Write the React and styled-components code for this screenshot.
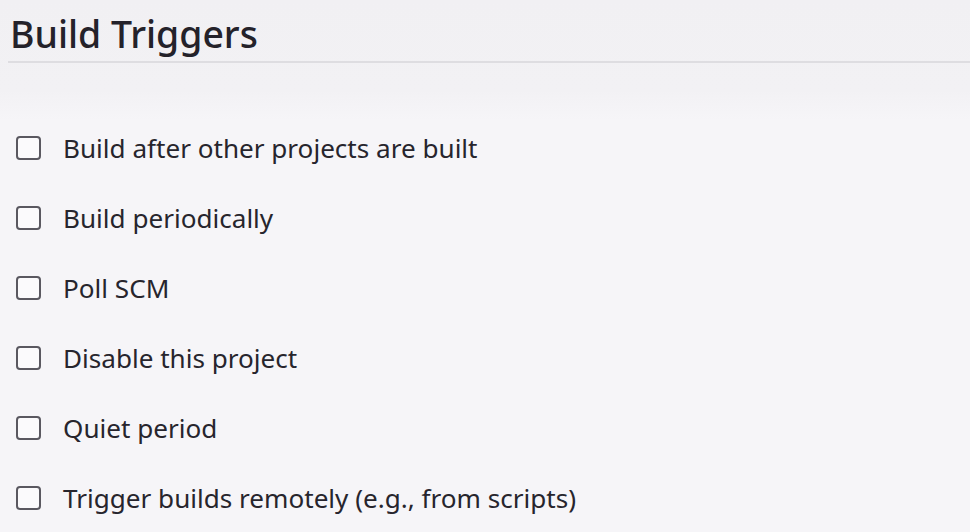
import styled, { createGlobalStyle } from "styled-components"

const GlobalStyle = createGlobalStyle`
  html, body {
    margin: 0;
    padding: 0;
    background: #f5f4f7;
    font-family: "Noto Sans", "Open Sans", sans-serif;
    color: #24222a;
  }
`

const Page = styled.div`
  width: 970px;
  height: 532px;
  overflow: hidden;
  background: linear-gradient(#f1f0f3 0, #f2f1f4 90px, #f6f5f8 120px, #f6f5f8 100%);
`

const Title = styled.h2`
  margin: 0 0 0 8px;
  padding: 12px 0 5px 2px;
  font-size: 37.4px;
  font-weight: 500;
  line-height: 44px;
  border-bottom: 2px solid #dedde1;
`

const List = styled.div`
  display: flex;
  flex-direction: column;
  gap: 34px;
  padding: 67px 0 0 16px;
`

const Row = styled.label`
  display: flex;
  align-items: center;
  gap: 22px;
  height: 36px;
  font-size: 26.1px;
  color: #27252d;
`

const Box = styled.span`
  width: 21px;
  height: 20px;
  border: 2px solid #5a5860;
  border-radius: 4px;
  background: #fbfafc;
  flex-shrink: 0;
`

const items = [
  "Build after other projects are built",
  "Build periodically",
  "Poll SCM",
  "Disable this project",
  "Quiet period",
  "Trigger builds remotely (e.g., from scripts)",
]

export default function App() {
  return (
    <Page>
      <GlobalStyle />
      <Title>Build Triggers</Title>
      <List>
        {items.map((t) => (
          <Row key={t}>
            <Box />
            <span>{t}</span>
          </Row>
        ))}
      </List>
    </Page>
  )
}
